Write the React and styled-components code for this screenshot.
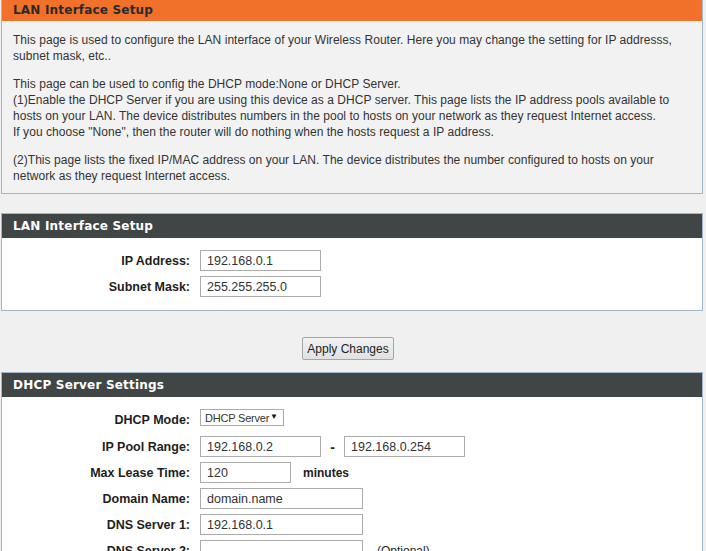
import React from 'react';
import styled, { createGlobalStyle } from 'styled-components';

// Global page styles
const GlobalStyle = createGlobalStyle`
  html, body {
    margin: 0;
    padding: 0;
    background: #f0f0f0;
    font-family: "Liberation Sans", Arial, sans-serif;
    font-size: 12px;
    color: #333;
    overflow: hidden;
  }
`;

// Styled components
const Page = styled.div`
  display: flex;
  flex-direction: column;
  padding: 0 3px 0 1px;
`;

const Panel = styled.section`
  border: 1px solid #a3b5c8;
  border-top: ${props => (props.$accent ? 'none' : '1px solid #a3b5c8')};
  background: ${props => (props.$accent ? '#f2f2f2' : '#fff')};
  margin-top: ${props => props.$gap || 0}px;
`;

const PanelTitle = styled.h2`
  margin: 0;
  height: ${props => (props.$accent ? 21 : 24)}px;
  line-height: ${props => (props.$accent ? 20 : 24)}px;
  padding-left: 11px;
  background: ${props => (props.$accent ? '#f1702a' : '#404545')};
  color: ${props => (props.$accent ? '#2a2a2a' : '#fff')};
  font-family: "DejaVu Sans", Verdana, sans-serif;
  font-size: 12px;
  font-weight: bold;
  letter-spacing: 0.2px;
`;

const Intro = styled.div`
  padding: 11px 10px 9px 11px;
`;

const Para = styled.p`
  margin: 0 0 12px;
  line-height: 16px;
  letter-spacing: 0.04px;
  &:last-child {
    margin-bottom: 0;
  }
`;

const Form = styled.div`
  display: flex;
  flex-direction: column;
  gap: 5px;
  padding: 12px 0 13px;
`;

const Row = styled.div`
  display: flex;
  align-items: center;
  min-height: ${props => props.$height || 21}px;
`;

const Label = styled.label`
  width: 188px;
  padding-right: 10px;
  text-align: right;
  font-weight: bold;
  font-size: 12.5px;
  color: #1e1e1e;
`;

const Input = styled.input`
  box-sizing: border-box;
  width: ${props => props.$width || 121}px;
  height: 21px;
  border: 1px solid #ababab;
  background: #fff;
  padding: 0 6px;
  font-family: "Liberation Sans", Arial, sans-serif;
  font-size: 12.5px;
  color: #333;
  outline: none;
`;

const SelectWrap = styled.div`
  position: relative;
  align-self: flex-start;
`;

const Select = styled.select`
  appearance: none;
  box-sizing: border-box;
  width: 84px;
  height: 17px;
  border: 1px solid #ababab;
  background: #fff;
  padding: 0 0 0 4px;
  font-family: "Liberation Sans", Arial, sans-serif;
  font-size: 11px;
  letter-spacing: -0.2px;
  color: #333;
`;

const Arrow = styled.span`
  position: absolute;
  right: 6px;
  top: 1px;
  font-size: 8px;
  line-height: 14px;
  color: #111;
  pointer-events: none;
`;

const Dash = styled.span`
  width: 23px;
  text-align: center;
  font-weight: bold;
  font-size: 14px;
  color: #222;
`;

const Unit = styled.span`
  margin-left: ${props => props.$gap || 12}px;
  font-weight: ${props => (props.$plain ? 'normal' : 'bold')};
  color: #222;
`;

const ButtonBar = styled.div`
  display: flex;
  justify-content: center;
  padding: 26px 8px 12px 0;
`;

const Button = styled.button`
  height: 23px;
  padding: 0 4px;
  border: 1px solid #a6a6a6;
  border-radius: 2px;
  background: linear-gradient(#f2f2f2, #e1e1e1);
  font-family: "Liberation Sans", Arial, sans-serif;
  font-size: 12px;
  color: #222;
`;

const App = () => {
  return (
    <Page>
      <GlobalStyle />
      <Panel $accent>
        <PanelTitle $accent>LAN Interface Setup</PanelTitle>
        <Intro>
          <Para>
            This page is used to configure the LAN interface of your Wireless Router. Here you may change the setting for IP addresss,
            <br />
            subnet mask, etc..
          </Para>
          <Para>
            This page can be used to config the DHCP mode:None or DHCP Server.
            <br />
            (1)Enable the DHCP Server if you are using this device as a DHCP server. This page lists the IP address pools available to
            <br />
            hosts on your LAN. The device distributes numbers in the pool to hosts on your network as they request Internet access.
            <br />
            If you choose "None", then the router will do nothing when the hosts request a IP address.
          </Para>
          <Para>
            (2)This page lists the fixed IP/MAC address on your LAN. The device distributes the number configured to hosts on your
            <br />
            network as they request Internet access.
          </Para>
        </Intro>
      </Panel>

      <Panel $gap={19}>
        <PanelTitle>LAN Interface Setup</PanelTitle>
        <Form>
          <Row>
            <Label>IP Address:</Label>
            <Input defaultValue='192.168.0.1' />
          </Row>
          <Row>
            <Label>Subnet Mask:</Label>
            <Input defaultValue='255.255.255.0' />
          </Row>
        </Form>
      </Panel>

      <ButtonBar>
        <Button>Apply Changes</Button>
      </ButtonBar>

      <Panel>
        <PanelTitle>DHCP Server Settings</PanelTitle>
        <Form>
          <Row $height={22}>
            <Label>DHCP Mode:</Label>
            <SelectWrap>
              <Select defaultValue='server'>
                <option value='none'>None</option>
                <option value='server'>DHCP Server</option>
              </Select>
              <Arrow>▼</Arrow>
            </SelectWrap>
          </Row>
          <Row>
            <Label>IP Pool Range:</Label>
            <Input defaultValue='192.168.0.2' />
            <Dash>-</Dash>
            <Input defaultValue='192.168.0.254' />
          </Row>
          <Row>
            <Label>Max Lease Time:</Label>
            <Input $width={91} defaultValue='120' />
            <Unit>minutes</Unit>
          </Row>
          <Row>
            <Label>Domain Name:</Label>
            <Input $width={163} defaultValue='domain.name' />
          </Row>
          <Row>
            <Label>DNS Server 1:</Label>
            <Input $width={163} defaultValue='192.168.0.1' />
          </Row>
          <Row>
            <Label>DNS Server 2:</Label>
            <Input $width={163} />
            <Unit $plain $gap={14}>(Optional)</Unit>
          </Row>
        </Form>
      </Panel>
    </Page>
  );
};

export default App;
